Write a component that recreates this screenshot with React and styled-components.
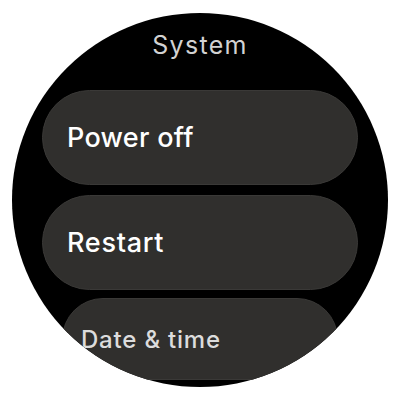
import React from "react";
import styled, { createGlobalStyle } from "styled-components";

const Global = createGlobalStyle`
html, body {
  margin:0;
  padding:0;
  background:#fff;
}
body {
  font-family: Inter, Roboto, "Liberation Sans", sans-serif;
}
`;

const Page = styled.div`
width:400px;
height:400px;
padding:13px 12px 0;
box-sizing:border-box;
`;

const Screen = styled.div`
width:376px;
height:374px;
border-radius:50%;
background:#000;
overflow:hidden;
display:flex;
flex-direction:column;
align-items:center;
padding-top:18px;
box-sizing:border-box;
`;

const Title = styled.div`
font-size:25px;
line-height:28px;
color:#d2d2d2;
letter-spacing:1.3px;
margin-bottom:31px;
`;

const Chip = styled.div`
flex-shrink:0;
width:${(p) => p.$width}px;
height:${(p) => p.$height}px;
margin-bottom:${(p) => p.$gap}px;
border-radius:${(p) => p.$height / 2}px;
background:#302f2d;
border:1px solid #3a3937;
box-sizing:border-box;
display:flex;
align-items:center;
padding-left:${(p) => p.$pad}px;
`;

const Label = styled.span`
font-size:${(p) => p.$size}px;
font-weight:${(p) => p.$weight};
color:${(p) => p.$color};
letter-spacing:${(p) => p.$track}px;
`;

const items = [
  { label: "Power off", width: 316, height: 95, gap: 10, pad: 24, size: 27, weight: 500, track: 0.3, color: "#ffffff" },
  { label: "Restart", width: 316, height: 95, gap: 8, pad: 24, size: 27, weight: 500, track: 0.7, color: "#ffffff" },
  { label: "Date & time", width: 276, height: 82, gap: 0, pad: 18, size: 24, weight: 450, track: 0.8, color: "#dcdcdc" },
];

const App = () => {
  return (
    <Page>
      <Global />
      <Screen>
        <Title>System</Title>
        {items.map((it) => (
          <Chip key={it.label} $width={it.width} $height={it.height} $gap={it.gap} $pad={it.pad}>
            <Label $size={it.size} $weight={it.weight} $track={it.track} $color={it.color}>
              {it.label}
            </Label>
          </Chip>
        ))}
      </Screen>
    </Page>
  );
};

export default App;
